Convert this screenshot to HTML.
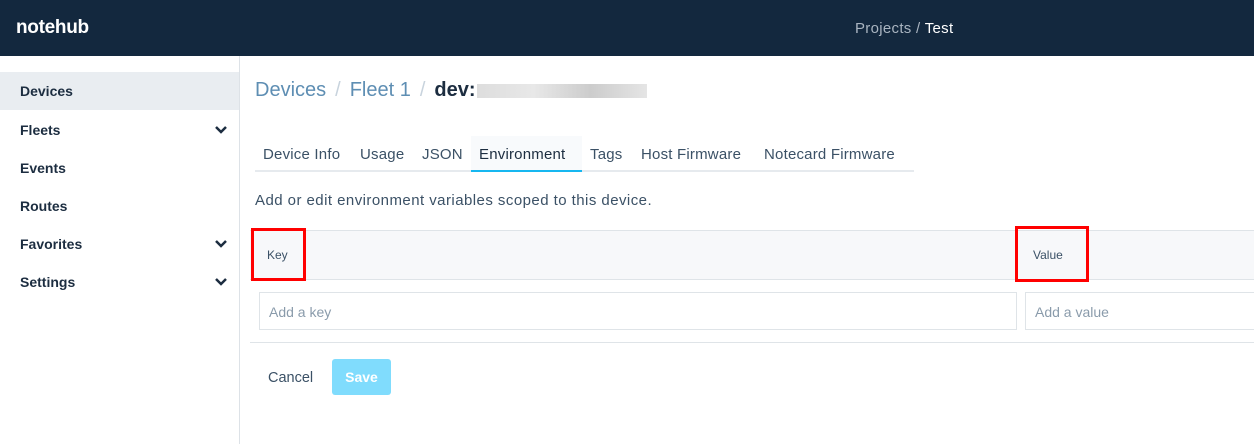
<!DOCTYPE html>
<html><head><style>
*{margin:0;padding:0;box-sizing:border-box}
body{width:1254px;height:444px;overflow:hidden;background:#fff;font-family:"Liberation Sans",sans-serif;position:relative;color:#1c2d40}
.hdr{position:absolute;left:0;top:0;width:1254px;height:56px;background:#13283e}
.logo{position:absolute;left:16px;top:17px;color:#fff;font-size:19px;font-weight:bold;letter-spacing:-0.3px}
.proj{position:absolute;left:855px;top:20px;color:#a9b4c0;font-size:15px;letter-spacing:0.3px}
.proj b{color:#fff;font-weight:normal}
.side{position:absolute;left:0;top:56px;width:240px;height:388px;border-right:1px solid #dde2e7}
.item{position:absolute;left:0;width:239px;height:38px;font-size:14px;font-weight:bold;color:#1c2d40;padding:11px 0 0 20px}
.item.act{background:#e9edf1}
.chev{position:absolute;right:11px;top:14px}
.a{position:absolute;white-space:nowrap}
.bc{font-size:20px;color:#5e8eb3;top:79px;left:255px}
.bc .s{color:#c8d3dd;margin:0 9px}
.bc .d{color:#1c2d40;font-weight:bold}
.t{position:absolute;top:146px;font-size:15px;color:#3b5166;white-space:nowrap;letter-spacing:0.2px}
.tabline{position:absolute;left:255px;top:170px;width:659px;height:2px;background:#e6eaee}
.tabact{position:absolute;left:471px;top:136px;width:111px;height:36px;background:#f8fafc;border-bottom:2px solid #16b7f0}
.desc{top:192px;left:255px;font-size:15px;color:#3b5166;letter-spacing:0.45px}
.th{position:absolute;left:250px;top:230px;width:1004px;height:50px;background:#f7f8fa;border-top:1px solid #dfe4e8;border-bottom:1px solid #dfe4e8}
.red{position:absolute;border:3px solid #f00}
.inp{position:absolute;top:292px;height:38px;border:1px solid #dfe4e8;font-size:14px;color:#8a9bab;padding:11px 0 0 9px}
.line{position:absolute;left:250px;top:342px;width:1004px;height:1px;background:#dfe4e8}
.save{position:absolute;left:332px;top:359px;width:59px;height:36px;background:#80dcfd;border-radius:3px;color:#fff;font-size:14px;font-weight:bold;text-align:center;padding-top:10px}
</style></head><body>
<div class="hdr"><div class="logo">notehub</div><div class="proj">Projects / <b>Test</b></div></div>
<div class="side">
<div class="item act" style="top:16px">Devices</div>
<div class="item" style="top:55px">Fleets<svg class="chev" width="14" height="10" viewBox="0 0 14 10"><path d="M2 2l5 5 5-5" stroke="#1c2d40" stroke-width="2.5" fill="none"/></svg></div>
<div class="item" style="top:93px">Events</div>
<div class="item" style="top:131px">Routes</div>
<div class="item" style="top:169px">Favorites<svg class="chev" width="14" height="10" viewBox="0 0 14 10"><path d="M2 2l5 5 5-5" stroke="#1c2d40" stroke-width="2.5" fill="none"/></svg></div>
<div class="item" style="top:207px">Settings<svg class="chev" width="14" height="10" viewBox="0 0 14 10"><path d="M2 2l5 5 5-5" stroke="#1c2d40" stroke-width="2.5" fill="none"/></svg></div>
</div>
<div class="a bc">Devices<span class="s">/</span>Fleet 1<span class="s">/</span><span class="d">dev:</span></div>
<div class="a" style="left:477px;top:84px;width:170px;height:14px;background:linear-gradient(90deg,#ddd,#e8e8e8,#ccc,#e5e5e5);"></div>
<div class="tabline"></div>
<div class="tabact"></div>
<div class="t" style="left:263px">Device Info</div>
<div class="t" style="left:360px">Usage</div>
<div class="t" style="left:422px">JSON</div>
<div class="t" style="left:479px;color:#1c2d40">Environment</div>
<div class="t" style="left:590px">Tags</div>
<div class="t" style="left:641px">Host Firmware</div>
<div class="t" style="left:764px">Notecard Firmware</div>
<div class="a desc">Add or edit environment variables scoped to this device.</div>
<div class="th"></div>
<div class="a" style="left:267px;top:248px;font-size:12px;color:#3b5166">Key</div>
<div class="a" style="left:1033px;top:248px;font-size:12px;color:#3b5166">Value</div>
<div class="red" style="left:251px;top:228px;width:55px;height:53px"></div>
<div class="red" style="left:1015px;top:226px;width:74px;height:56px"></div>
<div class="inp" style="left:259px;width:758px">Add a key</div>
<div class="inp" style="left:1025px;width:240px">Add a value</div>
<div class="line"></div>
<div class="a" style="left:268px;top:370px;font-size:14.5px;color:#3b5166">Cancel</div>
<div class="save">Save</div>
</body></html>
